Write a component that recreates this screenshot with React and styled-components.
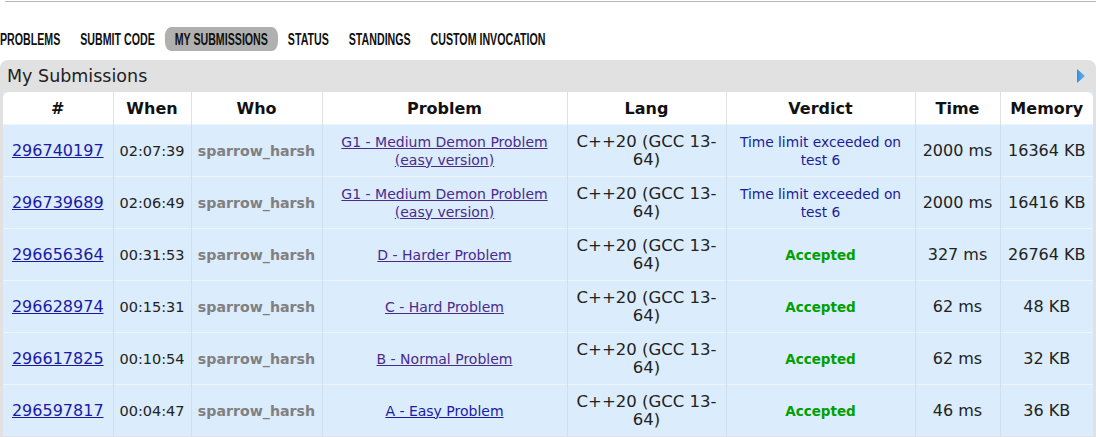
import React from "react";
import styled, { createGlobalStyle } from "styled-components";

const GlobalStyle = createGlobalStyle`
  html, body {
    margin: 0;
    padding: 0;
    background: #fff;
  }
  body {
    font-family: "DejaVu Sans", Verdana, sans-serif;
  }
`;

const submissions = [
  { id: "296740197", when: "02:07:39", problem: ["G1 - Medium Demon Problem", "(easy version)"], visited: true, verdict: "tle", time: "2000 ms", memory: "16364 KB" },
  { id: "296739689", when: "02:06:49", problem: ["G1 - Medium Demon Problem", "(easy version)"], visited: true, verdict: "tle", time: "2000 ms", memory: "16416 KB" },
  { id: "296656364", when: "00:31:53", problem: ["D - Harder Problem"], visited: true, verdict: "ok", time: "327 ms", memory: "26764 KB" },
  { id: "296628974", when: "00:15:31", problem: ["C - Hard Problem"], visited: true, verdict: "ok", time: "62 ms", memory: "48 KB" },
  { id: "296617825", when: "00:10:54", problem: ["B - Normal Problem"], visited: true, verdict: "ok", time: "62 ms", memory: "32 KB" },
  { id: "296597817", when: "00:04:47", problem: ["A - Easy Problem"], visited: false, verdict: "ok", time: "46 ms", memory: "36 KB" },
];

const menu = ["PROBLEMS", "SUBMIT CODE", "MY SUBMISSIONS", "STATUS", "STANDINGS", "CUSTOM INVOCATION"];

const App = () => {
  return (
    <Page>
      <GlobalStyle />
      <TopRule />
      <MenuBar>
        <Menu>
          {menu.map((m) => (
            <MenuItem key={m} $active={m === "MY SUBMISSIONS"}>{m}</MenuItem>
          ))}
        </Menu>
      </MenuBar>
      <Panel>
        <PanelTitle>
          <span>My Submissions</span>
          <Arrow viewBox="0 0 10 16">
            <defs>
              <linearGradient id="ag" x1="0" y1="0" x2="1" y2="0">
                <stop offset="0" stopColor="#2f8fe0" />
                <stop offset="1" stopColor="#6ab6f2" />
              </linearGradient>
            </defs>
            <path d="M1 1 L9 8 L1 15 Z" fill="url(#ag)" />
          </Arrow>
        </PanelTitle>
        <Table>
          <colgroup>
            <col style={{ width: 110 }} />
            <col style={{ width: 78 }} />
            <col style={{ width: 131 }} />
            <col style={{ width: 245 }} />
            <col style={{ width: 159 }} />
            <col style={{ width: 189 }} />
            <col style={{ width: 85 }} />
            <col style={{ width: 93 }} />
          </colgroup>
          <thead>
            <tr>
              <Th>#</Th>
              <Th>When</Th>
              <Th>Who</Th>
              <Th>Problem</Th>
              <Th>Lang</Th>
              <Th>Verdict</Th>
              <Th>Time</Th>
              <Th>Memory</Th>
            </tr>
          </thead>
          <tbody>
            {submissions.map((s) => (
              <tr key={s.id}>
                <Td><IdLink href="#">{s.id}</IdLink></Td>
                <Td $size="14.5px">{s.when}</Td>
                <Td><Who>sparrow_harsh</Who></Td>
                <Td>
                  <ProblemLink href="#" $visited={s.visited}>
                    {s.problem[0]}
                    {s.problem[1] && <br />}
                    {s.problem[1]}
                  </ProblemLink>
                </Td>
                <Td $size="16.5px" $tight>C++20 (GCC 13-<br />64)</Td>
                <Td>
                  {s.verdict === "tle" ? (
                    <Tle>Time limit exceeded on<br />test 6</Tle>
                  ) : (
                    <Ok>Accepted</Ok>
                  )}
                </Td>
                <Td>{s.time}</Td>
                <Td>{s.memory}</Td>
              </tr>
            ))}
          </tbody>
        </Table>
      </Panel>
    </Page>
  );
};

const Page = styled.div`
  width: 1096px;
  height: 437px;
  overflow: hidden;
  background: #fff;
`;

const TopRule = styled.div`
  height: 1px;
  margin-left: 5px;
  border-bottom: 1px solid #b9b9b9;
`;

const MenuBar = styled.div`
  height: 24px;
  margin-top: 25px;
  margin-bottom: 9px;
`;

/* the original menu uses a narrow face; squeeze a regular one to fit */
const Menu = styled.div`
  display: inline-flex;
  align-items: center;
  height: 24px;
  transform: scaleX(0.665);
  transform-origin: left center;
`;

const MenuItem = styled.div`
  font-family: "Liberation Sans", Arial, sans-serif;
  font-weight: bold;
  font-size: 16px;
  line-height: 22px;
  color: #111;
  padding: 2px 15px 0;
  border-radius: 9px;
  background: ${(p) => (p.$active ? "#b0b0b0" : "transparent")};
  &:first-child {
    padding-left: 0;
  }
`;

const Panel = styled.div`
  background: #e1e1e1;
  border-radius: 8px 8px 0 0;
  padding: 0 3px 3px 3px;
`;

const PanelTitle = styled.div`
  display: flex;
  align-items: center;
  justify-content: space-between;
  height: 32px;
  padding: 0 7px 0 4px;
  font-size: 17.5px;
  color: #222;
`;

const Arrow = styled.svg`
  width: 10px;
  height: 16px;
`;

const Table = styled.table`
  width: 1090px;
  border-collapse: collapse;
  table-layout: fixed;
  background: #dbecfc;
`;

const Th = styled.th`
  background: #fff;
  height: 32px;
  padding: 0;
  font-size: 16px;
  font-weight: bold;
  color: #111;
  text-align: center;
  border-left: 1px solid #e1e1e1;
  &:first-child {
    border-left: none;
    border-top-left-radius: 6px;
  }
  &:last-child {
    border-top-right-radius: 6px;
  }
`;

const Td = styled.td`
  height: 51px;
  padding: 0 ${(p) => (p.$tight ? "2px" : "4px")};
  text-align: center;
  vertical-align: middle;
  font-size: ${(p) => p.$size || "16px"};
  line-height: 18px;
  color: #222;
  border-left: 1px solid #d0dfee;
  border-top: 1px solid #eef5fd;
  &:first-child {
    border-left: none;
  }
`;

const IdLink = styled.a`
  color: #1a1aa6;
  text-decoration: underline;
  font-size: 16px;
`;

const Who = styled.span`
  color: #808080;
  font-weight: bold;
  font-size: 14.2px;
`;

const ProblemLink = styled.a`
  color: ${(p) => (p.$visited ? "#4b2a8c" : "#1a1aa6")};
  text-decoration: underline;
  font-size: 14px;
`;

const Tle = styled.span`
  color: #1c1c99;
  font-size: 13.8px;
`;

const Ok = styled.span`
  color: #00a000;
  font-weight: bold;
  font-size: 13.5px;
`;

export default App;
